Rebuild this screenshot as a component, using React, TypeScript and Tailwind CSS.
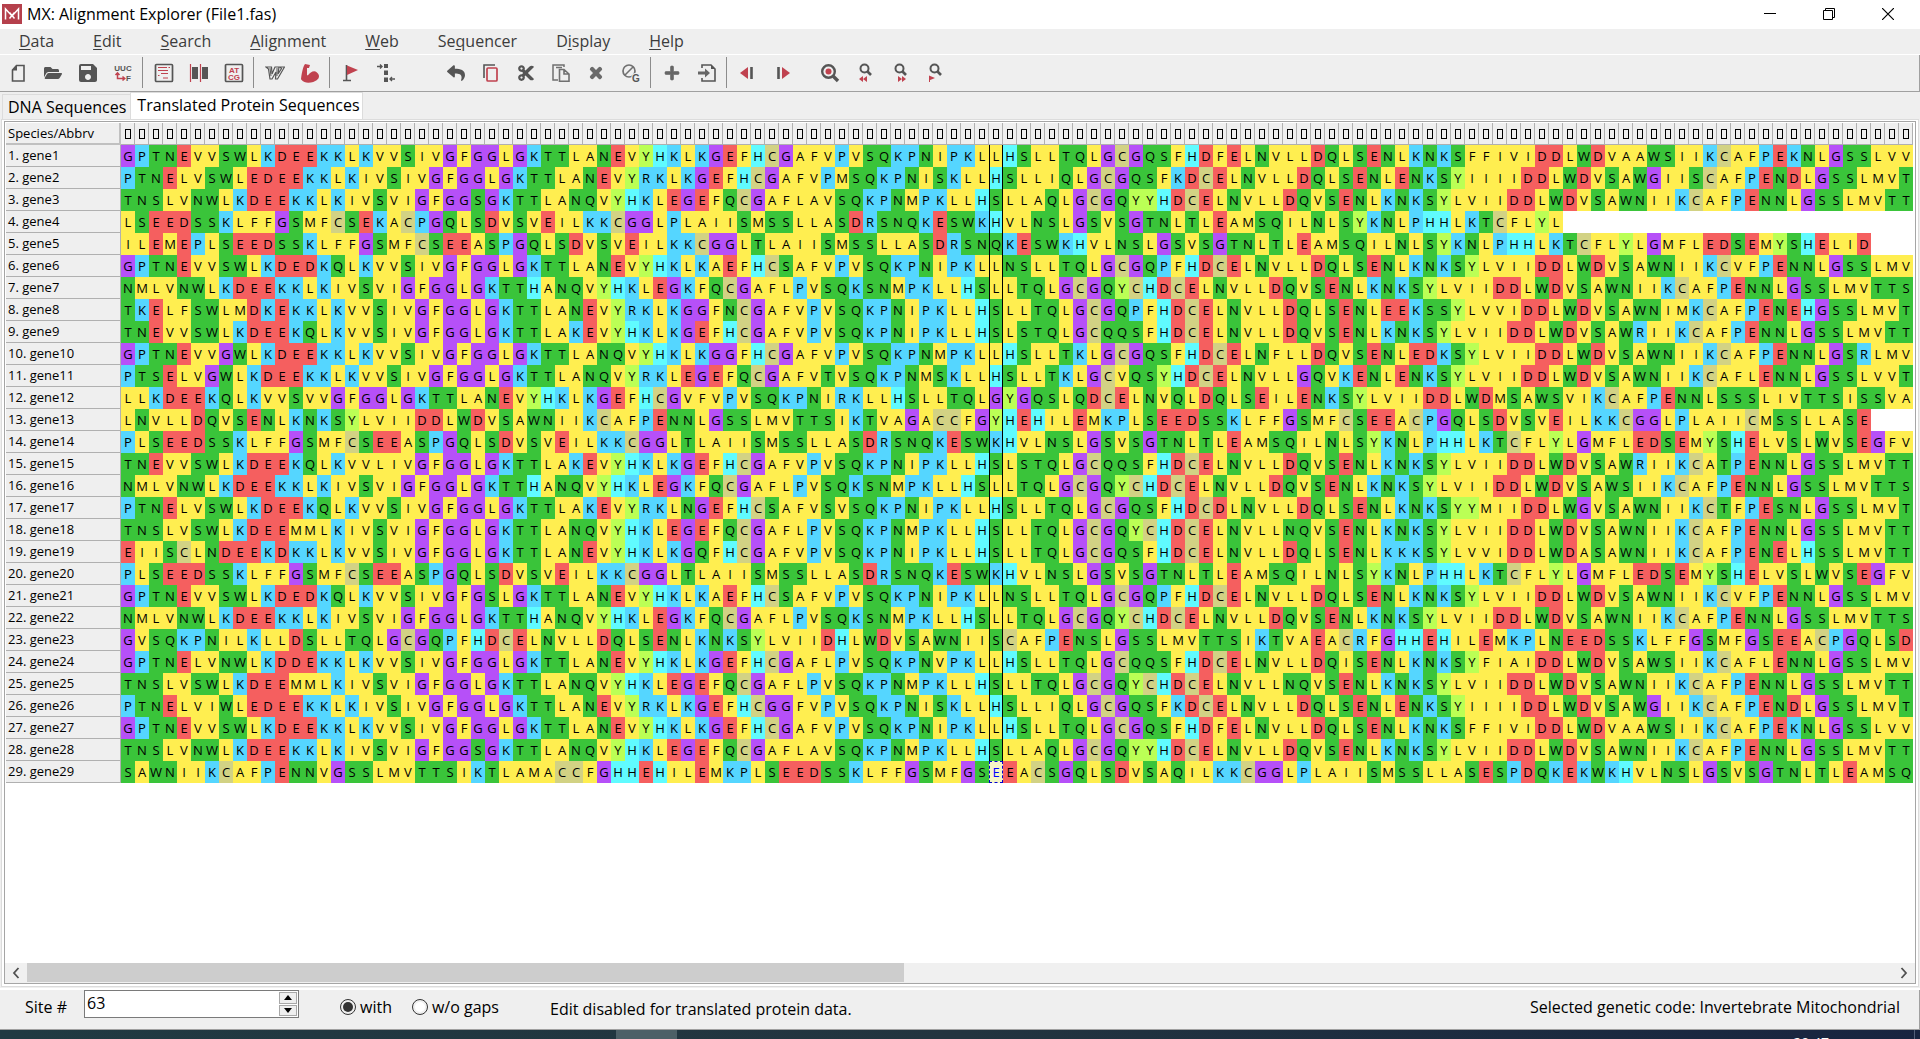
import type { ReactNode } from "react";
import { clsx } from "clsx";
import { FaCut, FaFolderOpen, FaPlus, FaReply, FaTimes } from "react-icons/fa";
import { MdSave } from "react-icons/md";

const GRAY = "#555555";
const RED = "#c0424f";

const menus = [
  { before: "", key: "D", after: "ata" },
  { before: "", key: "E", after: "dit" },
  { before: "", key: "S", after: "earch" },
  { before: "", key: "A", after: "lignment" },
  { before: "", key: "W", after: "eb" },
  { before: "Se", key: "q", after: "uencer" },
  { before: "D", key: "i", after: "splay" },
  { before: "", key: "H", after: "elp" },
];

const sequences = [
  "GPTNEVVSWLKDEEKKLKVVSIVGFGGLGKTTLANEVYHKLKGEFHCGAFVPVSQKPNIPKLLHSLLTQLGCGQSFHDFELNVLLDQLSENLKNKSFFIVIDDLWDVAAWSIIKCAFPEKNLGSSLVV",
  "PTNELVSWLEDEEKKLKIVSIVGFGGLGKTTLANEVYRKLKGEFHCGAFVPMSQKPNISKLLHSLLIQLGCGQSFKDCELNVLLDQLSENLENKSYIIIIDDLWDVSAWGIISCAFPENDLGSSLMVT",
  "TNSLVNWLKDEEKKLKIVSVIGFGGSGKTTLANQVYHKLEGEFQCGAFLAVSQKPNMPKLLHSLLAQLGCGQYYHDCELNVLLDQVSENLKNKSYLVIIDDLWDVSAWNIIKCAFPENNLGSSLMVTT",
  "LSEEDSSKLFFGSMFCSEKACPGQLSDVSVEILKKCGGLPLAIISMSSLLASDRSNQKESWKHVLNSLGSVSGTNLTLEAMSQILNLSYKNLPHHLKTCFLYL",
  "ILEMEPLSEEDSSKLFFGSMFCSEEASPGQLSDVSVEILKKCGGLTLAIISMSSLLASDRSNQKESWKHVLNSLGSVSGTNLTLEAMSQILNLSYKNLPHHLKTCFLYLGMFLEDSEMYSHELID",
  "GPTNEVVSWLKDEDKQLKVVSIVGFGGLGKTTLANEVYHKLKAEFHCSAFVPVSQKPNIPKLLNSLLTQLGCGQPFHDCELNVLLDQLSENLKNKSYLVIIDDLWDVSAWNIIKCVFPENNLGSSLMV",
  "NMLVNWLKDEEKKLKIVSVIGFGGLGKTTHANQVYHKLEGKFQCGAFLPVSQKSNMPKLLHSLLTQLGCGQYCHDCELNVLLDQVSENLKNKSYLVIIDDLWDVSAWNIIKCAFPENNLGSSLMVTTS",
  "TKELFSWLMDKEKKLKVVSIVGFGGLGKTTLANEVYRKLKGGFNCGAFVPVSQKPNIPKLLHSLLTQLGCGQPFHDCELNVLLDQLSENLEEKSSYLVVIDDLWDVSAWNIMKCAFPENEHGSSLMVT",
  "TNEVVSWLKDEEKQLKVVSIVGFGGLGKTTLAKEVYHKLKGEFHCGAFVPVSQKPNIPKLLHSLSTQLGCQQSFHDCELNVLLDQVSENLKNKSYLVIIDDLWDVSAWRIIKCAFPENNLGSSLMVTT",
  "GPTNEVVGWLKDEEKKLKVVSIVGFGGLGKTTLANQVYHKLKGGFHCGAFVPVSQKPNMPKLLHSLLTKLGCGQSFHDCELNFLLDQVSENLEDKSYLVIIDDLWDVSAWNIIKCAFPENNLGSRLMV",
  "PTSELVGWLKDEEKKLKVVSIVGFGGLGKTTLANQVYRKLEGEFQCGAFVTVSQKPNMSKLLHSLLTKLGCVQSYHDCELNVLLGQVKENLENKSYLVIIDDLWDVSAWNIIKCAFLENNLGSSLVVT",
  "LLKDEEKQLKVVSVVGFGGLGKTTLANEVYHKLKGEFHCGVFVPVSQKPNIRKLLHSLLTQLGYGQSLQDCELNVQLDQLSEILENKSYLVIIDDLWDMSAWSVIKCAFPENNLSSSLIVTTSISSVA",
  "LNVLLDQVSENLKNKSYLVIIDDLWDVSAWNIIKCAFPENNLGSSLMVTTSIKTVAGACCFGYHEHILEMKPLSEEDSSKLFFGSMFCSEEACPGQLSDVSVEILKKCGGLPLAIICMSSLLASE",
  "PLSEEDSSKLFFGSMFCSEEASPGQLSDVSVEILKKCGGLTLAIISMSSLLASDRSNQKESWKHVLNSLGSVSGTNLTLEAMSQILNLSYKNLPHHLKTCFLYLGMFLEDSEMYSHELVSLWVSEGFV",
  "TNEVVSWLKDEEKQLKVVLIVGFGGLGKTTLAKEVYHKLKGEFHCGAFVPVSQKPNIPKLLHSLSTQLGCQQSFHDCELNVLLDQVSENLKNKSYLVIIDDLWDVSAWRIIKCATPENNLGSSLMVTT",
  "NMLVNWLKDEEKKLKIVSVIGFGGLGKTTHANQVYHKLEGKFQCGAFLPVSQKSNMPKLLHSLLTQLGCGQYCHDCELNVLLDQVSENLKNKSYLVIIDDLWDVSAWSIIKCAFPENNLGSSLMVTTS",
  "PTNELVSWLKDEEKQLKVVSIVGFGGLGKTTLAKEVYRKLNGEFHCSAFVSVSQKPNIPKLLHSLLTQLGCGQSFHDCDLNVLLDQLSENLKNKSYYMIIDDLWGVSAWNIIKCTFPESNLGSSLMVT",
  "TNSLVSWLKDEEMMLKIVSVIGFGGLGKTTLANQVYHKLEGEFQCGAFLPVSQKPNMPKLLHSLLTQLGCGQYCHDCELNVLLNQVSENLKNKSYLVIIDDLWDVSAWNIIKCAFPENNLGSSLMVTT",
  "EIISCLNDEEKDKKLKVVSIVGFGGLGKTTLANEVYHKLKGQFHCGAFVPVSQKPNIPKLLHSLLTQLGCGQSFHDCELNVLLDQLSENLKKKSYLVVIDDLWDASAWNIIKCAFPENELHSSLMVTT",
  "PLSEEDSSKLFFGSMFCSEEASPGQLSDVSVEILKKCGGLTLAIISMSSLLASDRSNQKESWKHVLNSLGSVSGTNLTLEAMSQILNLSYKNLPHHLKTCFLYLGMFLEDSEMYSHELVSLWVSEGFV",
  "GPTNEVVSWLKDEDKQLKVVSIVGFGSLGKTTLANEVYHKLKAEFHCSAFVPVSQKPNIPKLLNSLLTQLGCGQPFHDCELNVLLDQLSENLKNKSYLVIIDDLWDVSAWNIIKCVFPENNLGSSLMV",
  "NMLVNWLKDEEKKLKIVSVIGFGGLGKTTHANQVYHKLEGKFQCGAFLPVSQKSNMPKLLHSLLTQLGCGQYCHDCELNVLLDQVSENLKNKSYLVIIDDLWDVSAWNIIKCAFPENNLGSSLMVTTS",
  "GVSQKPNILKLLDSLLTQLGCGQPFHDCELNVLLDQLSENLKNKSYLVIIDHLWDVSAWNIISCAFPENSLGSSLMVTTSIKTVAEACRFGHHEHILEMKPLNEEDSSKLFFGSMFGSEEACPGQLSD",
  "GPTNELVNWLKDDEKKLKVVSIVGFGGLGKTTLANEVYHKLKGEFHCGAFLPVSQKPNVPKLLHSLLTQLGCQQSFHDCELNVLLDQISENLKNKSYFIAIDDLWDVSAWSIIKCAFLENNLGSSLMV",
  "TNSLVSWLKDEEMMLKIVSVIGFGGLGKTTLANQVYHKLEGEFQCGAFLPVSQKPNMPKLLHSLLTQLGCGQYCHDCELNVLLNQVSENLKNKSYLVIIDDLWDVSAWNIIKCAFPENNLGSSLMVTT",
  "PTNELVIWLEDEEKKLKIVSIVGFGGLGKTTLANEVYRKLKGEFHCGGFVPVSQKPNISKLLHSLLIQLGCGQSFKDCELNVLLDQLSENLENKSYIIIIDDLWDVSAWGIIKCAFPENDLGSSLMVT",
  "GPTNEVVSWLKDEEKKLKVVSIVGFGGLGKTTLANEVYHKLKGEFHCGAFVPVSQKPNIPKLLHSLLTQLGCGQSFHDFELNVLLDQLSENLKNKSFFIVIDDLWDVAAWSIIKCAFPEKNLGSSLVV",
  "TNSLVNWLKDEEKKLKIVSVIGFGGSGKTTLANQVYHKLEGEFQCGAFLAVSQKPNMPKLLHSLLAQLGCGQYYHDCELNVLLDQVSENLKNKSYLVIIDDLWDVSAWNIIKCAFPENNLGSSLMVTT",
  "SAWNIIKCAFPENNVGSSLMVTTSIKTLAMACCFGHHEHILEMKPLSEEDSSKLFFGSMFGSEEACSGQLSDVSAQILKKCGGLPLAIISMSSLLASESPDQKEKWKHVLNSLGSVSGTNLTLEAMSQ",
];

const SITE_COUNT = 128;
const SELECTED_SITE = 63;
const SELECTED_ROW = 29;
const sites = Array.from({ length: SITE_COUNT }, (_, i) => i + 1);

const residueGroups = [
  { residues: "AFILMV", color: "bg-[#ffee50]" },
  { residues: "NQSTW", color: "bg-[#3ac43a]" },
  { residues: "DE", color: "bg-[#f55f5f]" },
  { residues: "KPR", color: "bg-[#55d6ff]" },
  { residues: "G", color: "bg-[#b650f8]" },
  { residues: "H", color: "bg-[#60fbff]" },
  { residues: "Y", color: "bg-[#bbff55]" },
  { residues: "C", color: "bg-[#d2d284]" },
];

function residueColor(residue: string) {
  return residueGroups.find((group) => group.residues.includes(residue))?.color;
}

function Icon({ children }: { children: ReactNode }) {
  return (
    <svg viewBox="0 0 20 20" className="h-5 w-5" fill="none" aria-hidden="true">
      {children}
    </svg>
  );
}

const searchLens = (
  <>
    <circle cx="9.5" cy="5.5" r="4" stroke={GRAY} strokeWidth="2" />
    <path d="M12.5 8.5L16 12" stroke={GRAY} strokeWidth="2.6" />
  </>
);

type Tool = { label: string; icon: ReactNode };

const toolGroups: { className?: string; tools: Tool[] }[] = [
  {
    tools: [
      {
        label: "New",
        icon: (
          <Icon>
            <path d="M8.5 2.5H16V18H4.5V7Z" stroke={GRAY} strokeWidth="1.6" />
            <path d="M9 2V7.5H4Z" fill={GRAY} />
          </Icon>
        ),
      },
      { label: "Open", icon: <FaFolderOpen className="h-4 w-5" color={GRAY} /> },
      { label: "Save", icon: <MdSave className="h-6 w-6" color={GRAY} /> },
      {
        label: "Translate",
        icon: (
          <Icon>
            <text x="10" y="8" textAnchor="middle" fontSize="8" fontWeight="bold" fontFamily="Liberation Sans, sans-serif" fill={GRAY}>UUC</text>
            <text x="13" y="18" fontSize="8" fontWeight="bold" fontFamily="Liberation Sans, sans-serif" fill={GRAY}>F</text>
            <path d="M4.5 10V15.5H11M2.5 12L4.5 9.8L6.5 12M9.5 13.5L11.8 15.5L9.5 17.5" stroke={RED} strokeWidth="1.5" />
          </Icon>
        ),
      },
    ],
  },
  {
    className: "border-l",
    tools: [
      {
        label: "Show translation",
        icon: (
          <Icon>
            <rect x="1.5" y="1.5" width="17" height="17" rx="1" stroke={GRAY} strokeWidth="1.7" />
            <path d="M4 4.5H13M14.5 4.5H16M4 7.5H14M7 10.5H14M4 12.5H5.5M9 15H14" stroke={RED} strokeWidth="1.2" />
          </Icon>
        ),
      },
      {
        label: "Align columns",
        icon: (
          <Icon>
            <path d="M3 4H9V16H3ZM13 4H19V16H13Z" fill={GRAY} />
            <path d="M1.5 1V19M11.5 1V19" stroke={RED} strokeWidth="1.2" />
          </Icon>
        ),
      },
      {
        label: "Nucleotides",
        icon: (
          <Icon>
            <rect x="1.5" y="1.5" width="17" height="17" rx="1" stroke={GRAY} strokeWidth="1.7" />
            <text x="10" y="9.5" textAnchor="middle" fontSize="8" fontWeight="bold" fontFamily="Liberation Sans, sans-serif" fill={RED}>AT</text>
            <text x="10" y="17" textAnchor="middle" fontSize="8" fontWeight="bold" fontFamily="Liberation Sans, sans-serif" fill={RED}>CG</text>
          </Icon>
        ),
      },
    ],
  },
  {
    className: "border-l",
    tools: [
      {
        label: "Align by ClustalW",
        icon: (
          <Icon>
            <path d="M1 4H6.5L7 11L10 4H14L13 11L16.500 5.500L15 4H19.500L12.500 16H10.500L11 9L7 16H5L3.500 6Z" stroke={GRAY} strokeWidth="1.2" />
            <path d="M5 5L6 13M12 5L12 13" stroke={GRAY} strokeWidth="1" />
          </Icon>
        ),
      },
      {
        label: "Align by MUSCLE",
        icon: (
          <svg viewBox="2 2 20 20" className="h-5 w-5" aria-hidden="true">
            <path
              fill={RED}
              d="M3 18.34C3 18.34 4 7.09 7 3L12 4L11 7.09H9V14.25H10C12 11.18 16.14 9.06 18.64 11.18C21.94 13.71 21.64 17.32 18.64 19.17C16.24 20.66 8.14 24.7 3 18.34Z"
            />
          </svg>
        ),
      },
    ],
  },
  {
    className: "border-l",
    tools: [
      {
        label: "Mark site",
        icon: (
          <Icon>
            <path d="M5.5 2V17M2 17.5H10" stroke={GRAY} strokeWidth="1.6" />
            <path d="M6 2.5L17 7L6 12Z" fill={RED} />
          </Icon>
        ),
      },
      {
        label: "Align marked sites",
        icon: (
          <Icon>
            <path d="M8 1H12V5H8ZM8 7.5H12V12H8ZM8 14.5H12V19H8Z" fill={GRAY} />
            <path d="M1 3.5H6M4 1.5L6 3.5L4 5.5M19 16H14M16 14L14 16L16 18" stroke={GRAY} strokeWidth="1.4" />
          </Icon>
        ),
      },
    ],
  },
  {
    className: "ml-[30px]",
    tools: [
      { label: "Undo", icon: <FaReply className="h-[18px] w-[18px]" color={GRAY} /> },
      {
        label: "Copy",
        icon: (
          <Icon>
            <path d="M3 15V2H14" stroke={GRAY} strokeWidth="1.6" />
            <rect x="6" y="5" width="10" height="13" rx="1" stroke={RED} strokeWidth="1.7" />
          </Icon>
        ),
      },
      { label: "Cut", icon: <FaCut className="h-[18px] w-[18px]" color={GRAY} /> },
      {
        label: "Paste",
        icon: (
          <Icon>
            <path d="M7 17H2V2H13V4M5 4.5H11" stroke="#707070" strokeWidth="1.5" />
            <path d="M8.5 6.5H13L18 11V18.2H8.5ZM13 6.5V11H18" stroke="#707070" strokeWidth="1.6" />
          </Icon>
        ),
      },
      { label: "Delete", icon: <FaTimes className="h-4 w-4" color="#6b6b6b" stroke="#6b6b6b" strokeWidth="40" /> },
      {
        label: "Delete gap-only sites",
        icon: (
          <Icon>
            <circle cx="8" cy="8" r="6" stroke="#707070" strokeWidth="1.7" />
            <path d="M4 12L12 4" stroke="#707070" strokeWidth="1.6" />
            <text x="11" y="19" fontSize="10" fontWeight="bold" fontFamily="Liberation Sans, sans-serif" fill={GRAY} stroke="#efefef" strokeWidth="2" paintOrder="stroke">G</text>
          </Icon>
        ),
      },
    ],
  },
  {
    className: "border-l",
    tools: [
      { label: "Insert sequence", icon: <FaPlus className="h-4 w-4" color="#666666" stroke="#666666" strokeWidth="20" /> },
      {
        label: "Insert from file",
        icon: (
          <Icon>
            <path d="M5 5V2H14L18 6V18H5V15" stroke={GRAY} strokeWidth="1.6" />
            <path d="M14 2V6H18Z" fill={GRAY} />
            <path d="M1 8.5H8V5.5L13 10L8 14.5V11.5H1Z" fill="#666666" />
          </Icon>
        ),
      },
    ],
  },
  {
    className: "border-l",
    tools: [
      {
        label: "Previous",
        icon: (
          <Icon>
            <path d="M10 4V16L2 10Z" fill={RED} />
            <path d="M13.5 4V16" stroke={GRAY} strokeWidth="2.6" />
          </Icon>
        ),
      },
      {
        label: "Next",
        icon: (
          <Icon>
            <path d="M9 4V16L17 10Z" fill={RED} />
            <path d="M5.5 4V16" stroke={GRAY} strokeWidth="2.6" />
          </Icon>
        ),
      },
    ],
  },
  {
    className: "ml-[7px]",
    tools: [
      {
        label: "Find motif",
        icon: (
          <Icon>
            <circle cx="8.5" cy="8.5" r="6.3" stroke={GRAY} strokeWidth="2.4" />
            <circle cx="8.5" cy="8.5" r="3" fill={RED} />
            <path d="M13 13L18 18" stroke={GRAY} strokeWidth="3.4" />
          </Icon>
        ),
      },
      {
        label: "Find previous",
        icon: (
          <Icon>
            {searchLens}
            <path d="M8 13V19L4 16ZM12 13V19L8 16Z" fill={RED} />
          </Icon>
        ),
      },
      {
        label: "Find next",
        icon: (
          <Icon>
            {searchLens}
            <path d="M8 13V19L12 16ZM12 13V19L16 16Z" fill={RED} />
          </Icon>
        ),
      },
      {
        label: "Find marked",
        icon: (
          <Icon>
            {searchLens}
            <path d="M4.5 13V19" stroke={RED} strokeWidth="1" />
            <path d="M4 12.5L10 15L4 17.5Z" fill={RED} />
          </Icon>
        ),
      },
    ],
  },
];

function TitleBar() {
  return (
    <header className="flex h-[29px] items-start bg-white pl-[2px]">
      <svg viewBox="0 0 20 20" className="mt-1 h-5 w-5" aria-hidden="true">
        <rect width="20" height="20" fill="#b5404c" />
        <path d="M3.5 15.5V5L10 12L16.5 5V15.5M7.5 14.5L12.5 8.5M7.5 8.5L12.5 14.5" stroke="#ffffff" strokeWidth="1.5" fill="none" />
      </svg>
      <h1 className="ml-[5px] pt-[2px] text-base leading-6 text-black">MX: Alignment Explorer (File1.fas)</h1>
      <div className="ml-auto flex pr-[3px]">
        <button aria-label="Minimize" className="flex h-7 w-[59px] items-center justify-center">
          <svg viewBox="0 0 12 12" className="h-3 w-3"><path d="M0 5.5H12" stroke="#000" /></svg>
        </button>
        <button aria-label="Restore" className="flex h-7 w-[59px] items-center justify-center">
          <svg viewBox="0 0 12 12" className="h-3 w-3" fill="none">
            <path d="M0.5 2.5H9.5V11.5H0.5ZM2.5 2.5V0.5H11.5V9.5H9.5" stroke="#000" />
          </svg>
        </button>
        <button aria-label="Close" className="flex h-7 w-[59px] items-center justify-center">
          <svg viewBox="0 0 12 12" className="h-3 w-3"><path d="M0 0L12 12M12 0L0 12" stroke="#000" strokeWidth="1.2" /></svg>
        </button>
      </div>
    </header>
  );
}

function MenuBar() {
  return (
    <nav className="flex h-[26px] items-start gap-[39px] border-b border-white pl-[19px] text-[#3c3c3c]">
      {menus.map((menu) => (
        <button key={menu.before + menu.key} className="text-base leading-6">
          {menu.before}
          <span className="underline underline-offset-2">{menu.key}</span>
          {menu.after}
        </button>
      ))}
    </nav>
  );
}

function Toolbar() {
  return (
    <div role="toolbar" className="flex h-[37px] items-start border-r border-b border-[#a0a0a0] pt-[2px]">
      {toolGroups.map((group, i) => (
        <div key={i} className={clsx("flex h-[31px] border-[#8c8c8c]", i > 0 && "pl-[3px]", i < toolGroups.length - 1 && "pr-[2px]", group.className)}>
          {group.tools.map((tool) => (
            <button key={tool.label} aria-label={tool.label} className="flex w-[35px] items-center justify-center">
              {tool.icon}
            </button>
          ))}
        </div>
      ))}
    </div>
  );
}

function Tabs() {
  return (
    <div role="tablist" className="flex h-[27px] items-end pl-[2px] text-base leading-6 text-black">
      <button role="tab" aria-selected="false" className="h-[25px] border-t border-l border-[#dcdcdc] pr-1 pl-[5px]">
        DNA Sequences
      </button>
      <button role="tab" aria-selected="true" className="flex h-[27px] border-x border-t border-[#dcdcdc] bg-white pr-[2px] pl-[6px]">
        Translated Protein Sequences
      </button>
    </div>
  );
}

function AlignmentGrid() {
  return (
    <div className="min-h-0 flex-1 overflow-hidden pt-[1px] pl-[1px]">
      <table className="w-[1907px] table-fixed border-separate border-spacing-0 text-[13px] leading-[21px] text-black">
        <colgroup>
          <col className="w-[115px]" />
          <col span={SITE_COUNT} className="w-[14px]" />
        </colgroup>
        <thead>
          <tr className="h-[22px] bg-[#efefef]">
            <th scope="col" className="border-r-2 border-b-2 border-[#c0c0c0] p-0 pl-[2px] text-left leading-5 font-normal">
              Species/Abbrv
            </th>
            {sites.map((site) => (
              <th key={site} scope="col" aria-label={`Site ${site}`} className="border-r border-b border-[#b0b0b0] p-0">
                <span className="mx-auto block h-[10px] w-[6px] border border-black" />
              </th>
            ))}
          </tr>
        </thead>
        <tbody>
          {sequences.map((sequence, row) => (
            <tr key={row} className="h-[22px]">
              <th scope="row" className="border-r border-b border-[#b0b0b0] bg-[#efefef] p-0 pl-[2px] text-left font-normal">
                {row + 1}. gene{row + 1}
              </th>
              {sites.map((site) => {
                const residue = sequence[site - 1] ?? "";
                const inColumn = site === SELECTED_SITE;
                const isCursor = inColumn && row + 1 === SELECTED_ROW;
                return (
                  <td
                    key={site}
                    className={clsx(
                      "p-0 text-center",
                      isCursor ? "border border-dashed border-[#0000d0] bg-[#f5f5c8] leading-5 text-[#0000ff]" : residue && residueColor(residue),
                      inColumn && !isCursor && "border-x border-black",
                    )}
                  >
                    {residue}
                  </td>
                );
              })}
            </tr>
          ))}
        </tbody>
      </table>
    </div>
  );
}

function ScrollBar() {
  return (
    <div className="flex h-[20px] bg-[#f0f0f0] pb-[1px] text-[#505050]">
      <button aria-label="Scroll left" className="flex w-[22px] items-center justify-center">
        <svg viewBox="0 0 8 12" className="h-3 w-2" fill="none"><path d="M6.5 1L2 6L6.5 11" stroke="currentColor" strokeWidth="1.8" /></svg>
      </button>
      <div className="flex-1">
        <div className="h-full w-[47%] bg-[#cdcdcd]" />
      </div>
      <button aria-label="Scroll right" className="flex w-[22px] items-center justify-center">
        <svg viewBox="0 0 8 12" className="h-3 w-2" fill="none"><path d="M1.5 1L6 6L1.5 11" stroke="currentColor" strokeWidth="1.8" /></svg>
      </button>
    </div>
  );
}

function GapOption({ label, checked }: { label: string; checked?: boolean }) {
  return (
    <label className="flex items-center gap-1">
      <input
        type="radio"
        name="gaps"
        defaultChecked={checked}
        className="h-4 w-4 appearance-none rounded-full border border-[#333333] bg-white bg-clip-content p-[2px] checked:bg-[#333333]"
      />
      {label}
    </label>
  );
}

function StatusBar() {
  return (
    <footer className="flex h-[40px] items-start border-r border-b border-[#a0a0a0] pl-[25px] text-base leading-6 text-black">
      <label htmlFor="site" className="w-[59px] pt-[5px]">Site #</label>
      <div className="flex h-[28px] w-[215px] border border-[#7a7a7a] bg-white">
        <input id="site" defaultValue="63" className="min-w-0 flex-1 pb-[3px] pl-[2px] outline-none" />
        <div className="flex w-5 flex-col gap-[1px] p-[1px]">
          <button aria-label="Next site" className="flex flex-1 items-center justify-center border border-[#a8a8a8] bg-[#efefef]">
            <svg viewBox="0 0 8 5" className="h-[5px] w-2"><path d="M0 5L4 0L8 5Z" /></svg>
          </button>
          <button aria-label="Previous site" className="flex flex-1 items-center justify-center border border-[#a8a8a8] bg-[#efefef]">
            <svg viewBox="0 0 8 5" className="h-[5px] w-2"><path d="M0 0L4 5L8 0Z" /></svg>
          </button>
        </div>
      </div>
      <div className="ml-[41px] flex gap-5 pt-[5px]">
        <GapOption label="with" checked />
        <GapOption label="w/o gaps" />
      </div>
      <p className="ml-[51px] pt-[7px]">Edit disabled for translated protein data.</p>
      <p className="ml-auto pt-[5px] pr-[19px]">Selected genetic code: Invertebrate Mitochondrial</p>
    </footer>
  );
}

function Taskbar() {
  return (
    <div className="flex h-[9px] shrink-0 justify-between overflow-hidden bg-linear-to-r from-[#203a42] via-[#22343f] to-[#182440] pr-[5px] pl-[32.1%]">
      <div className="h-full w-[61px] bg-[#4d6067]" />
      <div className="flex border-r border-[#53607a] pr-[85px]">
        <span className="pt-[3px] text-sm text-white">20:47</span>
      </div>
    </div>
  );
}

export default function App() {
  return (
    <div className="flex h-screen w-full flex-col overflow-hidden bg-[#efefef] font-['Open_Sans',sans-serif]">
      <TitleBar />
      <MenuBar />
      <Toolbar />
      <Tabs />
      <main className="mx-[1px] flex min-h-0 flex-1 flex-col border border-[#dcdcdc] bg-white p-[2px] pt-[1px]">
        <div className="flex min-h-0 flex-1 flex-col border border-[#a5a5a5]">
          <AlignmentGrid />
          <ScrollBar />
        </div>
      </main>
      <div className="mt-[1px] h-[2px] bg-white" />
      <StatusBar />
      <Taskbar />
    </div>
  );
}
